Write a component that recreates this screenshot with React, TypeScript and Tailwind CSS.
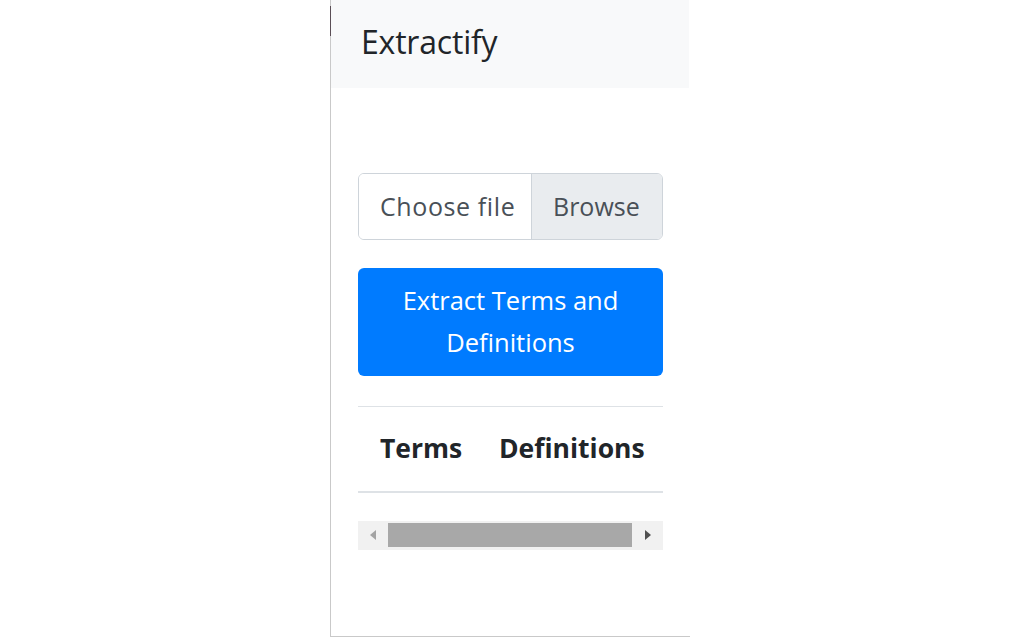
export default function App() {
  return (
    <div className="w-[1020px] h-[638px] bg-white flex" style={{ fontFamily: '"Open Sans", "Noto Sans", sans-serif' }}>
      <div className="ml-[330px] w-[360px] h-[637px] border-l border-b border-[#c9c9c9] relative flex flex-col">
        <div className="absolute -left-px top-[6px] h-[30px] w-px bg-[#5a4e55]" />
        <div className="h-[88px] w-[358px] bg-[#f8f9fa] flex items-center pl-[30px] pb-[4px]">
          <h1 className="text-[32px] text-[#212529] tracking-[-0.2px]">Extractify</h1>
        </div>
        <div className="px-[27px] pt-[85px] flex flex-col w-[359px]">
          <div className="h-[67px] flex border border-[#ced4da] rounded-[6px] overflow-hidden text-[25px] text-[#495057]">
            <div className="w-[172px] flex items-center pl-[21px] bg-white tracking-[0.6px]">Choose file</div>
            <div className="flex-1 flex items-center pl-[21px] bg-[#e9ecef] border-l border-[#ced4da]">Browse</div>
          </div>
          <button className="mt-[28px] h-[108px] bg-[#007bff] rounded-[6px] text-white text-[25.5px] leading-[42px] px-[16px] pb-[2px]">
            Extract Terms and
            <br />
            Definitions
          </button>
          <table className="mt-[30px] w-full border-collapse text-[26.5px] text-[#212529]">
            <thead>
              <tr className="border-t border-b-2 border-[#dee2e6]">
                <th className="h-[85px] text-left pl-[22px] font-bold w-[120px]">Terms</th>
                <th className="text-left pl-[21px] font-bold">Definitions</th>
              </tr>
            </thead>
          </table>
          <div className="mt-[28px] h-[29px] bg-[#f1f1f1] flex items-center">
            <div className="w-[30px] flex items-center justify-center">
              <svg width="8" height="12" viewBox="0 0 8 12"><path d="M7 1 L1 6 L7 11 Z" fill="#a3a3a3" /></svg>
            </div>
            <div className="w-[244px] h-[24px] bg-[#a8a8a8]" />
            <div className="flex-1 flex items-center justify-center">
              <svg width="8" height="12" viewBox="0 0 8 12"><path d="M1 1 L7 6 L1 11 Z" fill="#505050" /></svg>
            </div>
          </div>
        </div>
      </div>
    </div>
  );
}
